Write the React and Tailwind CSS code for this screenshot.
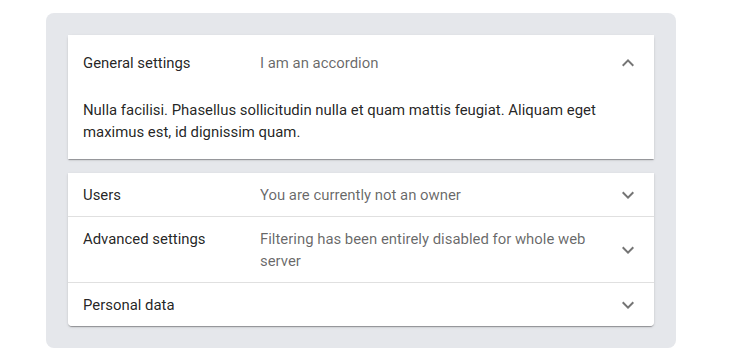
import { useState } from 'react';

const items = [
  {
    id: 'general',
    title: 'General settings',
    subtitle: 'I am an accordion',
    body: 'Nulla facilisi. Phasellus sollicitudin nulla et quam mattis feugiat. Aliquam eget maximus est, id dignissim quam.',
  },
  { id: 'users', title: 'Users', subtitle: 'You are currently not an owner' },
  {
    id: 'advanced',
    title: 'Advanced settings',
    subtitle: 'Filtering has been entirely disabled for whole web server',
  },
  { id: 'personal', title: 'Personal data', subtitle: '' },
];

function Chevron({ up }) {
  return (
    <svg
      viewBox="0 0 24 24"
      className={`w-6 h-6 -my-px shrink-0 self-center fill-[rgba(0,0,0,0.54)] ${up ? 'rotate-180' : ''}`}
    >
      <path d="M16.59 8.59 12 13.17 7.41 8.59 6 10l6 6 6-6z" />
    </svg>
  );
}

function Row({ item, open, onToggle, first }) {
  return (
    <div className={`bg-white ${first ? '' : 'border-t border-[#e0e0e0]'}`}>
      <button
        type="button"
        onClick={() => onToggle(item.id)}
        className={`w-full flex items-start pl-[15px] pr-[14px] text-left ${open ? 'pt-[17px] pb-[17px]' : 'py-[10.5px]'}`}
      >
        <span className="w-[177px] shrink-0 text-[rgba(0,0,0,0.87)]">{item.title}</span>
        <span className="flex-1 pr-3 text-[rgba(0,0,0,0.6)]">{item.subtitle}</span>
        <Chevron up={open} />
      </button>
      {open && (
        <div className="pl-[15px] pr-4 pt-2 pb-4 text-[rgba(0,0,0,0.87)]">{item.body}</div>
      )}
    </div>
  );
}

export default function App() {
  const [expanded, setExpanded] = useState('general');
  const toggle = (id) => setExpanded(expanded === id ? null : id);

  const shadow =
    'shadow-[0px_2px_1px_-1px_rgba(0,0,0,0.2),0px_1px_1px_0px_rgba(0,0,0,0.14),0px_1px_3px_0px_rgba(0,0,0,0.12)]';

  const openItem = items.find((i) => i.id === expanded);
  const rest = items.filter((i) => i.id !== expanded);

  return (
    <div className="w-[730px] h-[360px] bg-white pt-[13px] pl-[46px] font-['Roboto',sans-serif] text-[14.9px] leading-[22px]">
      <div className="w-[630px] bg-[#e5e7eb] rounded-lg p-[22px]">
        {openItem && (
          <div className={`rounded-t ${shadow} mb-[14px]`}>
            <Row item={openItem} open onToggle={toggle} first />
          </div>
        )}
        <div className={`rounded-b overflow-hidden ${shadow}`}>
          {rest.map((item, i) => (
            <Row key={item.id} item={item} open={false} onToggle={toggle} first={i === 0} />
          ))}
        </div>
      </div>
    </div>
  );
}
